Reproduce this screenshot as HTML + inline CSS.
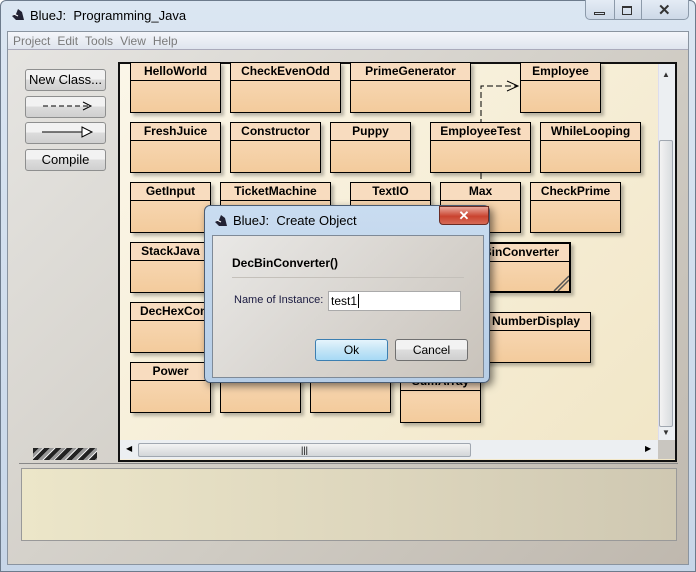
<!DOCTYPE html>
<html><head><style>
*{box-sizing:border-box;margin:0;padding:0}
body{width:696px;height:572px;overflow:hidden;font-family:"Liberation Sans",sans-serif;background:#fff;position:relative}
.abs{position:absolute}
.win{left:0;top:0;width:696px;height:572px;background:linear-gradient(#dbe6f2,#c7d6e8);border:1px solid #6d7b8c;border-radius:6px 6px 0 0}
.title{left:30px;top:8px;font-size:13px;color:#000}
.client{left:7px;top:31px;width:682px;height:534px;background:linear-gradient(135deg,#e6e5e2,#cfcbc3 60%,#bfb8ae);border:1px solid #8a94a0}
.menu{left:8px;top:32px;width:680px;height:18px;background:linear-gradient(#f4f6fa,#dfe5ee);font-size:12px;color:#7a7a7a;padding:2px 5px;border-bottom:1px solid #aab}
.menu span{margin-right:7px}
.btn{left:25px;width:81px;height:22px;border:1px solid #8e8f8f;border-radius:3px;background:linear-gradient(#f2f2f2 45%,#dcdcdc 50%,#cfcfcf);font-size:13px;text-align:center;line-height:20px}
.canvas{left:118px;top:62px;width:559px;height:400px;border:2px solid #111;background:linear-gradient(135deg,#fbf6e8,#f1e6c6);overflow:hidden}
.cls{position:absolute;border:1px solid #000;background:linear-gradient(#f9dcbc,#f3cb9c);box-shadow:3px 3px 3px rgba(0,0,0,.25)}
.cls .h{height:18px;border-bottom:1px solid #000;background:#f8dcbf;font-weight:bold;font-size:12px;text-align:center;line-height:17px;white-space:nowrap;overflow:hidden}
.vs{left:658px;top:64px;width:17px;height:376px;background:#eceff2;border-left:1px solid #dde}
.hs{left:120px;top:440px;width:538px;height:19px;background:#eceff2}
.dlg{left:204px;top:205px;width:286px;height:178px;background:linear-gradient(#c9dcf0,#b6cde6);border:1px solid #4b5d73;border-radius:6px;box-shadow:3px 3px 8px rgba(0,0,0,.5)}
.inner{left:7px;top:29px;width:272px;height:143px;border:1px solid #7f8a97;background:linear-gradient(135deg,#e9e8e6,#c9c3bb)}
</style></head><body>
<div class="abs win"></div>
<svg class="abs" style="left:10px;top:8px" width="16" height="14"><path d="M2 8 L6 6 L8 1 L12 4 L14 12 L6 12 Z" fill="#223"/><path d="M4 6 L8 8" stroke="#fff"/></svg>
<div class="abs title">BlueJ:&nbsp; Programming_Java</div>
<div class="abs" style="left:585px;top:0;width:104px;height:20px;border:1px solid #8c9aaa;border-top:none;border-radius:0 0 5px 5px;background:linear-gradient(#e4ecf5,#cdd9e7)"></div>
<div class="abs" style="left:614px;top:0;width:1px;height:19px;background:#8c9aaa"></div>
<div class="abs" style="left:641px;top:0;width:1px;height:19px;background:#8c9aaa"></div>
<div class="abs" style="left:594px;top:12px;width:11px;height:3px;border:1px solid #333"></div>
<div class="abs" style="left:622px;top:6px;width:10px;height:9px;border:1px solid #333;border-top-width:2px"></div>
<div class="abs" style="left:658px;top:1px;font-size:15px;font-weight:bold;color:#333">✕</div>
<div class="abs client"></div>
<div class="abs menu"><span>Project</span><span>Edit</span><span>Tools</span><span>View</span><span>Help</span></div>
<div class="abs btn" style="top:69px">New Class...</div>
<div class="abs btn" style="top:96px"><svg width="60" height="18"><path d="M7 9 H54" stroke="#000" stroke-dasharray="5 3"/><path d="M47 5 L55 9 L47 13" fill="none" stroke="#000"/></svg></div>
<div class="abs btn" style="top:122px"><svg width="60" height="18"><path d="M6 9 H46" stroke="#000"/><path d="M46 4 L56 9 L46 14 Z" fill="#fff" stroke="#000"/></svg></div>
<div class="abs btn" style="top:149px">Compile</div>
<div class="abs" style="left:33px;top:448px;width:64px;height:12px;background:repeating-linear-gradient(135deg,#222 0 4px,#999 4px 7px,#eee 7px 8px)"></div>
<div class="abs canvas">
<svg class="abs" style="left:0;top:0" width="560" height="400"><path d="M361 115 V22 H398" fill="none" stroke="#000" stroke-dasharray="6 3"/><path d="M387 17 L398 22 L387 27" fill="none" stroke="#000"/></svg>
</div>
<div id="cl"></div>
<div class="cls" style="left:130px;top:62px;width:91px;height:51px"><div class="h" style="height:18px">HelloWorld</div></div>
<div class="cls" style="left:230px;top:62px;width:111px;height:51px"><div class="h">CheckEvenOdd</div></div>
<div class="cls" style="left:350px;top:62px;width:121px;height:51px"><div class="h">PrimeGenerator</div></div>
<div class="cls" style="left:520px;top:62px;width:81px;height:51px"><div class="h">Employee</div></div>
<div class="cls" style="left:130px;top:122px;width:91px;height:51px"><div class="h">FreshJuice</div></div>
<div class="cls" style="left:230px;top:122px;width:91px;height:51px"><div class="h">Constructor</div></div>
<div class="cls" style="left:330px;top:122px;width:81px;height:51px"><div class="h">Puppy</div></div>
<div class="cls" style="left:430px;top:122px;width:101px;height:51px"><div class="h">EmployeeTest</div></div>
<div class="cls" style="left:540px;top:122px;width:101px;height:51px"><div class="h">WhileLooping</div></div>
<div class="cls" style="left:130px;top:182px;width:81px;height:51px"><div class="h">GetInput</div></div>
<div class="cls" style="left:220px;top:182px;width:111px;height:51px"><div class="h">TicketMachine</div></div>
<div class="cls" style="left:350px;top:182px;width:81px;height:51px"><div class="h">TextIO</div></div>
<div class="cls" style="left:440px;top:182px;width:81px;height:51px"><div class="h">Max</div></div>
<div class="cls" style="left:530px;top:182px;width:91px;height:51px"><div class="h">CheckPrime</div></div>
<div class="cls" style="left:130px;top:242px;width:81px;height:51px"><div class="h">StackJava</div></div>
<div class="cls" style="left:440px;top:242px;width:131px;height:51px;border-width:2px"><div class="h" style="text-align:right;padding-right:10px">DecBinConverter</div><svg class="abs" style="right:0;bottom:0" width="16" height="16"><path d="M1 16 L16 1 M5 16 L16 5" stroke="#555" stroke-width="1.5"/></svg></div>
<div class="cls" style="left:130px;top:302px;width:81px;height:51px"><div class="h" style="text-align:left;padding-left:9px">DecHexConverter</div></div>
<div class="cls" style="left:440px;top:312px;width:151px;height:51px"><div class="h" style="text-align:right;padding-right:10px">NumberDisplay</div></div>
<div class="cls" style="left:130px;top:362px;width:81px;height:51px"><div class="h">Power</div></div>
<div class="cls" style="left:220px;top:362px;width:81px;height:51px"><div class="h"></div></div>
<div class="cls" style="left:310px;top:362px;width:81px;height:51px"><div class="h"></div></div>
<div class="cls" style="left:400px;top:372px;width:81px;height:51px"><div class="h">SumArray</div></div>
<div class="abs vs"></div>
<div class="abs" style="left:659px;top:140px;width:14px;height:287px;border:1px solid #a0a7b0;border-radius:2px;background:linear-gradient(90deg,#f3f3f3,#d9dcdf)"></div>
<div class="abs" style="left:662px;top:70px;font-size:8px;color:#333">▲</div>
<div class="abs" style="left:662px;top:428px;font-size:8px;color:#333">▼</div>
<div class="abs hs"></div>
<div class="abs" style="left:658px;top:440px;width:17px;height:19px;background:#c9c6c0"></div>
<div class="abs" style="left:138px;top:443px;width:333px;height:14px;border:1px solid #a0a7b0;border-radius:2px;background:linear-gradient(#f3f3f3,#d3d6d9);font-size:9px;text-align:center;line-height:12px">|||</div>
<div class="abs" style="left:126px;top:444px;font-size:8px">◀</div>
<div class="abs" style="left:645px;top:444px;font-size:8px">▶</div>
<div class="abs" style="left:19px;top:463px;width:659px;height:1px;background:#888"></div>
<div class="abs" style="left:21px;top:468px;width:656px;height:73px;border:1px solid #999;background:linear-gradient(90deg,#ece6c9,#ddd6bd 55%,#cfc8b2)"></div>
<div class="abs dlg">
<svg class="abs" style="left:8px;top:8px" width="16" height="14"><path d="M2 8 L6 6 L8 1 L12 4 L14 12 L6 12 Z" fill="#223"/><path d="M4 6 L8 8" stroke="#fff"/></svg>
<div class="abs" style="left:28px;top:7px;font-size:13px">BlueJ:&nbsp; Create Object</div>
<div class="abs" style="left:234px;top:0;width:50px;height:19px;border:1px solid #6b2c24;border-radius:0 0 4px 4px;background:linear-gradient(#e9a89c,#c9432f 55%,#d66a55);color:#fff;font-weight:bold;text-align:center;font-size:13px;line-height:18px">✕</div>
<div class="abs inner">
<div class="abs" style="left:19px;top:20px;font-size:12px;font-weight:bold">DecBinConverter()</div>
<div class="abs" style="left:19px;top:41px;width:232px;height:1px;background:#c4c0ba"></div>
<div class="abs" style="left:21px;top:58px;font-size:11px;color:#1a1a40">Name of Instance:</div>
<div class="abs" style="left:115px;top:55px;width:133px;height:20px;background:#fff;border:1px solid #aaa;font-size:12px;padding:2px 2px">test1<span style="border-left:1px solid #000;margin-left:1px"></span></div>
<div class="abs" style="left:102px;top:103px;width:73px;height:22px;border:1px solid #3c7fb1;border-radius:3px;background:linear-gradient(#e5f4fc,#c4e5f6 50%,#a7d9f5);font-size:12px;text-align:center;line-height:20px">Ok</div>
<div class="abs" style="left:182px;top:103px;width:73px;height:22px;border:1px solid #707070;border-radius:3px;background:linear-gradient(#f2f2f2 45%,#dddddd 50%,#cfcfcf);font-size:12px;text-align:center;line-height:20px">Cancel</div>
</div>
</div>
</body></html>
